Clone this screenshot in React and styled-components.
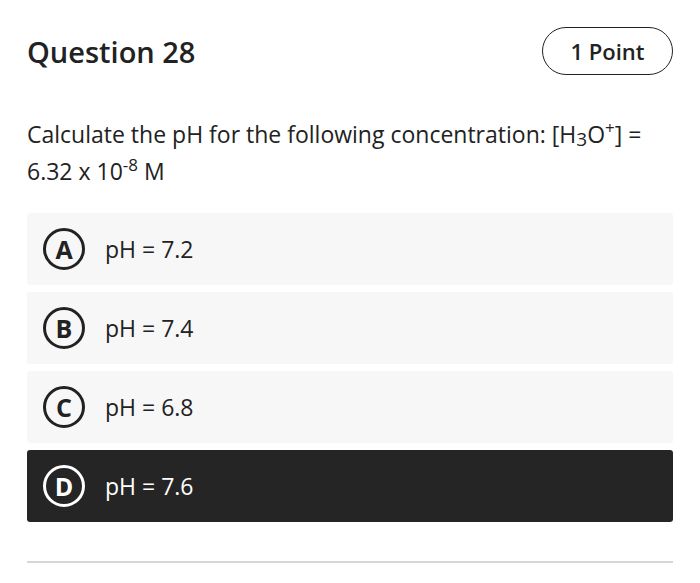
import React from 'react';
import styled, { createGlobalStyle } from 'styled-components';

const GlobalStyle = createGlobalStyle`
  body {
    margin: 0;
    background: #fff;
    font-family: "Open Sans", "Liberation Sans", sans-serif;
    color: #222;
  }
`;

const Page = styled.div`
  padding: 27px 27px 0;
  width: 700px;
  box-sizing: border-box;
`;

const Header = styled.div`
  display: flex;
  justify-content: space-between;
  align-items: center;
  height: 48px;
`;

const Title = styled.h2`
  margin: 0;
  font-size: 29px;
  font-weight: 600;
  color: #222;
`;

const PointBadge = styled.div`
  width: 131px;
  height: 48px;
  box-sizing: border-box;
  border: 1.5px solid #222;
  border-radius: 24px;
  display: flex;
  align-items: center;
  justify-content: center;
  font-size: 22px;
  font-weight: 600;
  color: #222;
`;

const Prompt = styled.p`
  margin: 41px 0 0;
  font-size: 23px;
  line-height: 37px;
  color: #222;

  sub {
    font-size: 19px;
    line-height: 0;
    vertical-align: -3px;
  }

  sup {
    font-size: 17px;
    line-height: 0;
  }
`;

const Options = styled.div`
  display: flex;
  flex-direction: column;
  gap: 7px;
  margin-top: 23px;
`;

const Option = styled.div`
  display: flex;
  align-items: center;
  height: 72px;
  padding-left: 16px;
  border-radius: 3px;
  background: ${p => (p.$selected ? '#252525' : '#f7f7f7')};
  color: ${p => (p.$selected ? '#fff' : '#222')};
`;

const Letter = styled.span`
  width: 42px;
  height: 42px;
  box-sizing: border-box;
  border: 3px solid currentColor;
  border-radius: 50%;
  display: flex;
  align-items: center;
  justify-content: center;
  font-size: 25px;
  font-weight: 700;
  margin-right: 20px;
`;

const Answer = styled.span`
  font-size: 23px;
`;

const Divider = styled.hr`
  margin: 39px 0 0;
  border: none;
  border-top: 2px solid #d6d6d6;
`;

const answers = [
  { key: 'A', text: 'pH = 7.2' },
  { key: 'B', text: 'pH = 7.4' },
  { key: 'C', text: 'pH = 6.8' },
  { key: 'D', text: 'pH = 7.6', selected: true },
];

export default function App() {
  return (
    <>
      <GlobalStyle />
      <Page>
        <Header>
          <Title>Question 28</Title>
          <PointBadge>1 Point</PointBadge>
        </Header>
        <Prompt>
          Calculate the pH for the following concentration: [H<sub>3</sub>O<sup>+</sup>] =
          <br />
          6.32 x 10<sup>-8</sup> M
        </Prompt>
        <Options>
          {answers.map(a => (
            <Option key={a.key} $selected={a.selected}>
              <Letter>{a.key}</Letter>
              <Answer>{a.text}</Answer>
            </Option>
          ))}
        </Options>
        <Divider />
      </Page>
    </>
  );
}
